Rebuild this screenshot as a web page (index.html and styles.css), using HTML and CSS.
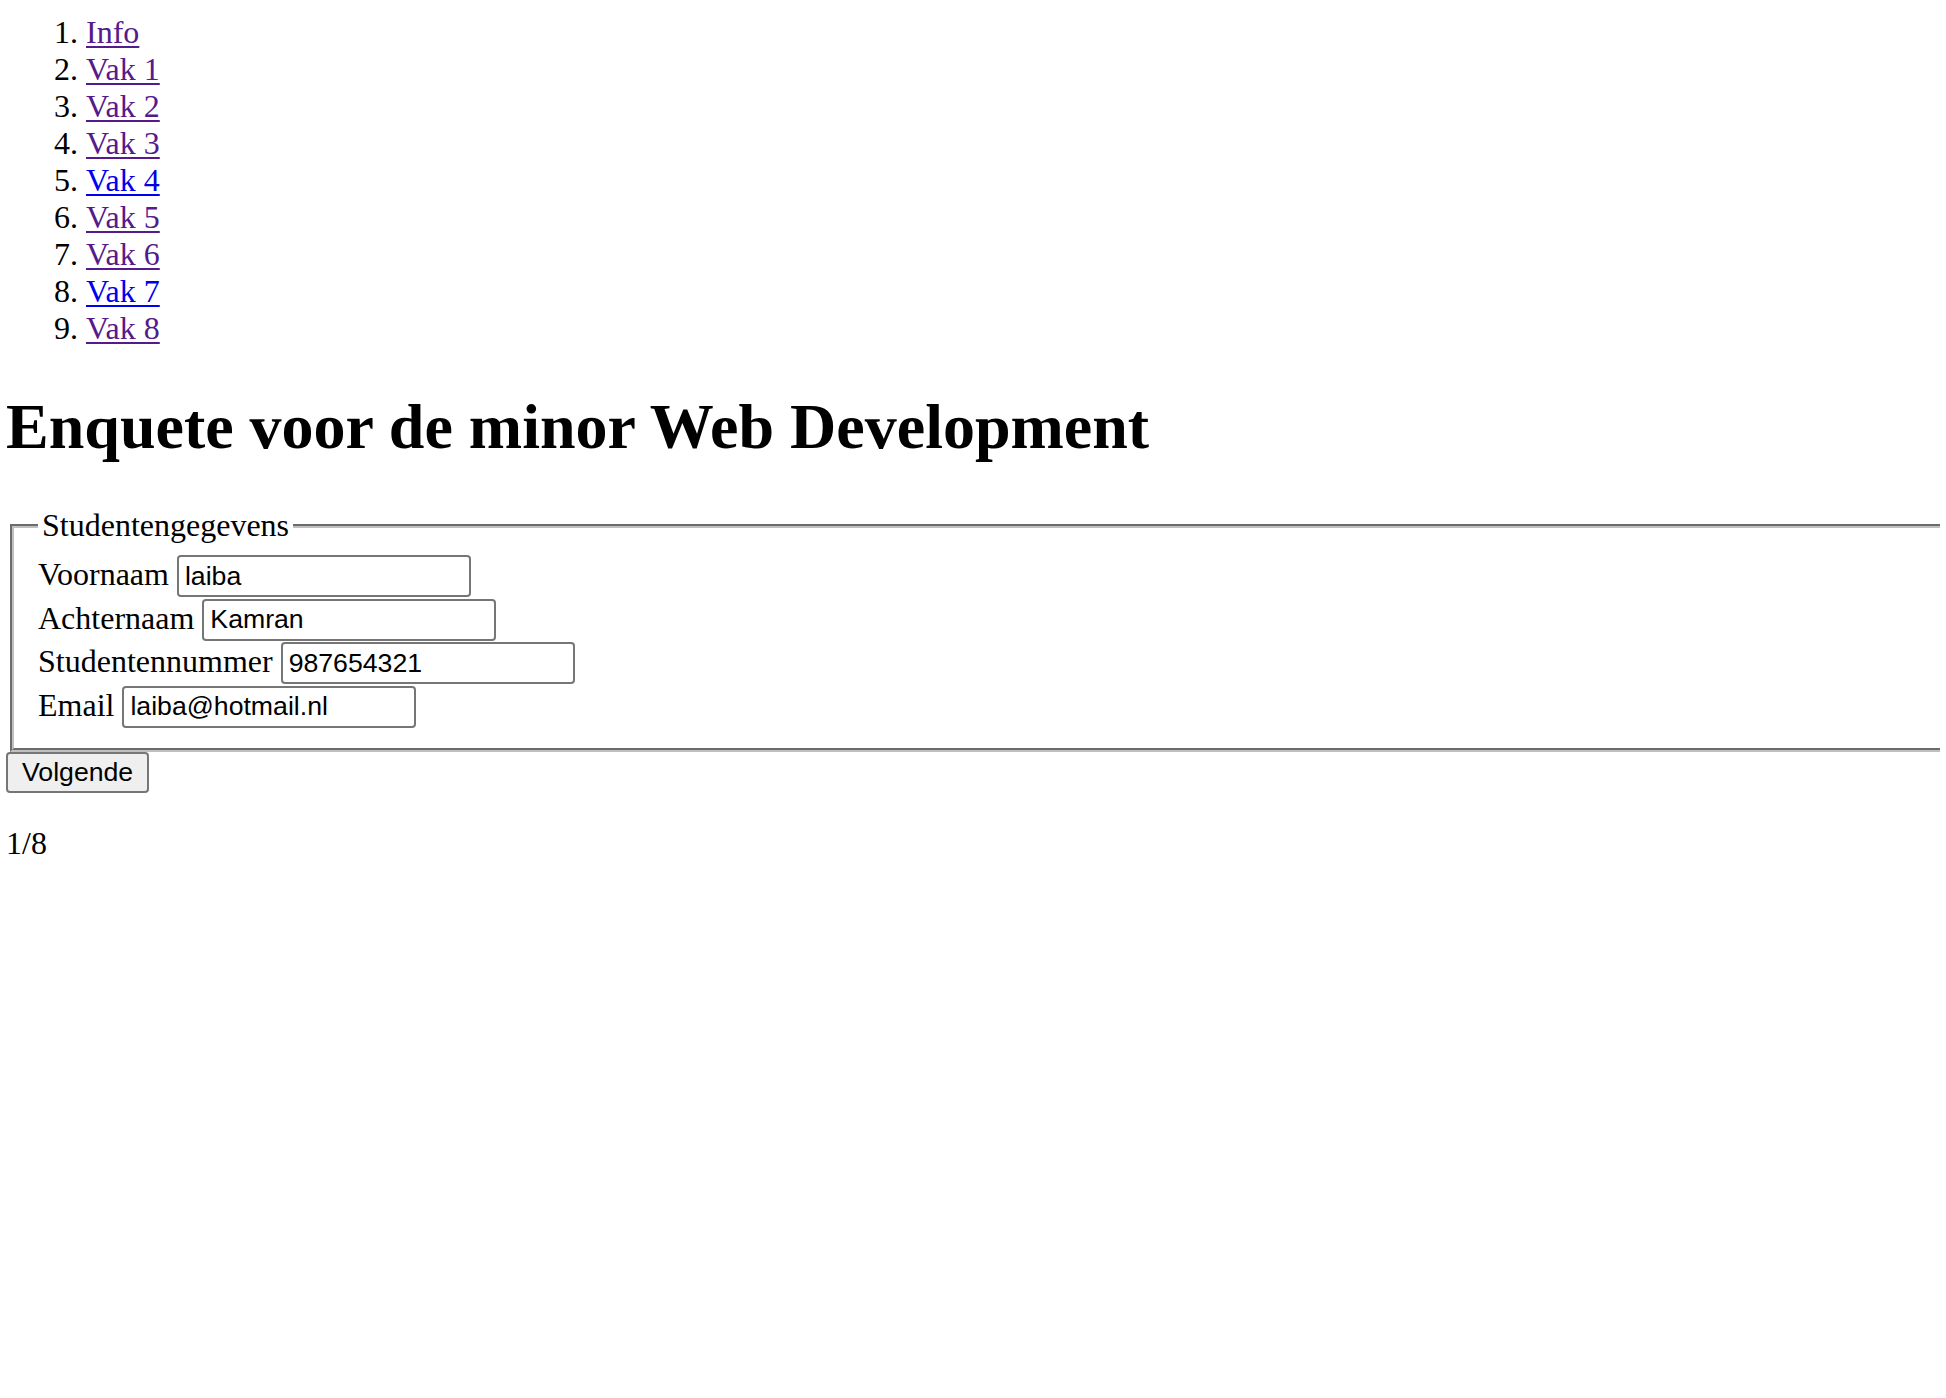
FILE: index.html
```html
<!doctype html>
<html lang="nl">
<head>
    <meta charset="UTF-8">
    <meta name="viewport" content="width=device-width, initial-scale=1.0">
    <title>Enquete minor Web Development</title>
    <link rel="stylesheet" href="styles.css">
</head>
<body>
    <ol class="nav">
        <li><a class="seen" href="#info">Info</a></li>
        <li><a class="seen" href="#vak1">Vak 1</a></li>
        <li><a class="seen" href="#vak2">Vak 2</a></li>
        <li><a class="seen" href="#vak3">Vak 3</a></li>
        <li><a href="#vak4">Vak 4</a></li>
        <li><a class="seen" href="#vak5">Vak 5</a></li>
        <li><a class="seen" href="#vak6">Vak 6</a></li>
        <li><a href="#vak7">Vak 7</a></li>
        <li><a class="seen" href="#vak8">Vak 8</a></li>
    </ol>

    <h1>Enquete voor de minor Web Development</h1>

    <form class="survey" action="#">
        <fieldset class="student">
            <legend>Studentengegevens</legend>
            <div class="row"><label for="voornaam">Voornaam</label> <input type="text" id="voornaam" value="laiba"></div>
            <div class="row"><label for="achternaam">Achternaam</label> <input type="text" id="achternaam" value="Kamran"></div>
            <div class="row"><label for="nummer">Studentennummer</label> <input type="text" id="nummer" value="987654321"></div>
            <div class="row"><label for="email">Email</label> <input type="email" id="email" value="laiba@hotmail.nl"></div>
        </fieldset>
        <button type="button" class="next">Volgende</button>
    </form>

    <p class="step">1/8</p>
</body>
</html>
```

FILE: styles.css
```css
html{overflow-x: hidden; background: #fff;}
body{margin: 14px 6px; font-family: "Liberation Serif", "Times New Roman", serif; font-size: 32px; color: #000;}

.nav{margin: 0 0 32px; padding-left: 80px;}
.nav a{color: #0000ee; text-decoration-thickness: 2px; text-underline-offset: 3px;}
.nav a.seen{color: #551a8b;}

h1{font-size: 64px; margin: 43px 0;}

.survey{margin: 0;}
.student{margin: 0 -60px 0 4px; padding: 11px 24px 19px; border: 4px groove #c0c0c0; min-width: 0;}
.student legend{padding: 0 4px;}
.row{padding-bottom: 1.5px;}

.row input{
    font-family: "Liberation Sans", Arial, sans-serif; font-size: 26.67px; color: #000;
    width: 294px; height: 42px; box-sizing: border-box; margin: 0;
    padding: 2px 6px; border: 2px solid #767676; border-radius: 4px; background: #fff;
}

.next{
    font-family: "Liberation Sans", Arial, sans-serif; font-size: 26.67px; color: #000;
    margin: 0; height: 41px; padding: 2px 14px;
    background: #efefef; border: 2px solid #767676; border-radius: 4px;
}

.step{margin: 32px 0;}
```
